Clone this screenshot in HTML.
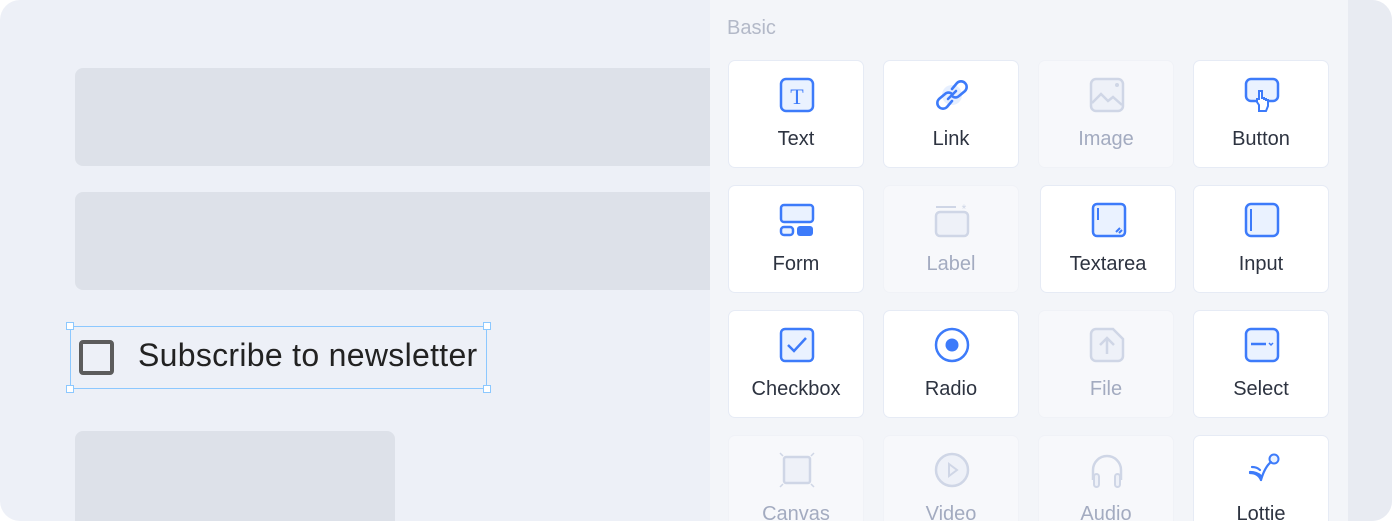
<!DOCTYPE html><html><head><style>
*{margin:0;padding:0;box-sizing:border-box}
body{width:1392px;height:521px;background:#fff;font-family:"Liberation Sans",sans-serif;overflow:hidden;position:relative}
#wrap{position:absolute;left:0;top:0;width:1392px;height:521px;background:#edf0f7;border-radius:20px;overflow:hidden}
.bar{position:absolute;background:#dde1e9;border-radius:8px}
#panel{position:absolute;left:710px;top:0;width:638px;height:521px;background:#f3f5f9}
#strip{position:absolute;left:1348px;top:0;width:44px;height:521px;background:#e8ebf2}
.card{position:absolute;width:136px;height:108px;background:#fff;border:1px solid #e6ebf5;border-radius:7px;text-align:center}
.card.d{background:#f7f8fb;border-color:#f0f2f7}
.card svg{position:absolute;left:50px;top:16px;width:36px;height:36px}
.card span{position:absolute;left:0;right:0;top:67px;font-size:20px;color:#2d3340}
.card.d span{color:#a3abc0}
.lbl{position:absolute;left:727px;top:17px;font-size:20px;color:#b3b9c8}
</style></head><body><div id="wrap">
<div class="bar" style="left:75px;top:68px;width:660px;height:98px"></div>
<div class="bar" style="left:75px;top:192px;width:660px;height:98px"></div>
<div class="bar" style="left:75px;top:431px;width:320px;height:110px"></div>
<div style="position:absolute;left:70px;top:326px;width:417px;height:63px;border:1px solid #8cc8ff"></div>
<div style="position:absolute;left:66px;top:322px;width:8px;height:8px;border:1px solid #8cc8ff;background:#fff"></div>
<div style="position:absolute;left:483px;top:322px;width:8px;height:8px;border:1px solid #8cc8ff;background:#fff"></div>
<div style="position:absolute;left:66px;top:385px;width:8px;height:8px;border:1px solid #8cc8ff;background:#fff"></div>
<div style="position:absolute;left:483px;top:385px;width:8px;height:8px;border:1px solid #8cc8ff;background:#fff"></div>
<div style="position:absolute;left:79px;top:340px;width:35px;height:35px;border:4px solid #5c5c5c;border-radius:4px"></div>
<div style="position:absolute;left:138px;top:337px;font-size:32px;color:#222;letter-spacing:0.3px">Subscribe to newsletter</div>
<div id="panel"></div><div id="strip"></div>
<div class="lbl">Basic</div>

<div class="card" style="left:728px;top:60px"><svg viewBox="0 0 36 36"><rect x="2" y="2" width="32" height="32" rx="5" fill="#eaf2ff" stroke="#3d7bfa" stroke-width="2.5"/><text x="18" y="27" font-size="22" text-anchor="middle" fill="#3d7bfa" font-family="Liberation Serif">T</text></svg><span>Text</span></div>
<div class="card" style="left:883px;top:60px"><svg viewBox="0 0 36 36"><circle cx="18" cy="18" r="10" fill="#e6efff"/><path d="M18 12l5-6a5.5 5.5 0 018 8l-6 5a5 5 0 01-7 0M18 24l-5 6a5.5 5.5 0 01-8-8l6-5a5 5 0 017 0M14 22l8-8" fill="none" stroke="#3d7bfa" stroke-width="2.6" stroke-linecap="round"/></svg><span>Link</span></div>
<div class="card d" style="left:1038px;top:60px"><svg viewBox="0 0 36 36"><rect x="2" y="2" width="32" height="32" rx="5" fill="#eef1f8" stroke="#cfd6e6" stroke-width="2.5"/><path d="M3 26l9-9 7 7 5-4 9 8" fill="none" stroke="#cfd6e6" stroke-width="2.5"/><circle cx="28" cy="8" r="2" fill="#cfd6e6"/></svg><span>Image</span></div>
<div class="card" style="left:1193px;top:60px"><svg viewBox="0 0 36 36"><rect x="2" y="2" width="32" height="22" rx="5" fill="#eaf2ff" stroke="#3d7bfa" stroke-width="2.5"/><path d="M15 34v-6l-2-3v-3h2v-8h3v7h2v1h2v1h2v6l-2 5z" fill="#fff" stroke="#3d7bfa" stroke-width="2"/></svg><span>Button</span></div>

<div class="card" style="left:728px;top:185px"><svg viewBox="0 0 36 36"><rect x="2" y="3" width="32" height="17" rx="3" fill="#eaf2ff" stroke="#3d7bfa" stroke-width="2.5"/><rect x="2" y="25" width="12" height="8" rx="3" fill="#eaf2ff" stroke="#3d7bfa" stroke-width="2.5"/><rect x="18" y="24" width="16" height="10" rx="3" fill="#3d7bfa"/></svg><span>Form</span></div>
<div class="card d" style="left:883px;top:185px"><svg viewBox="0 0 36 36"><path d="M2 5h20" stroke="#cfd6e6" stroke-width="2"/><text x="30" y="11" font-size="12" fill="#cfd6e6" text-anchor="middle">*</text><rect x="2" y="10" width="32" height="24" rx="4" fill="#eef1f8" stroke="#cfd6e6" stroke-width="2.5"/></svg><span>Label</span></div>
<div class="card" style="left:1040px;top:185px"><svg viewBox="0 0 36 36"><rect x="2" y="2" width="32" height="32" rx="4" fill="#eaf2ff" stroke="#3d7bfa" stroke-width="2.5"/><path d="M7 6v12M25 30l4-4M28 31l3-3" stroke="#3d7bfa" stroke-width="2"/></svg><span>Textarea</span></div>
<div class="card" style="left:1193px;top:185px"><svg viewBox="0 0 36 36"><rect x="2" y="2" width="32" height="32" rx="5" fill="#eaf2ff" stroke="#3d7bfa" stroke-width="2.5"/><path d="M7 7v22" stroke="#3d7bfa" stroke-width="2"/></svg><span>Input</span></div>

<div class="card" style="left:728px;top:310px"><svg viewBox="0 0 36 36"><rect x="2" y="2" width="32" height="32" rx="4" fill="#eaf2ff" stroke="#3d7bfa" stroke-width="2.5"/><path d="M9 18l6 6 12-13" fill="none" stroke="#3d7bfa" stroke-width="2.5"/></svg><span>Checkbox</span></div>
<div class="card" style="left:883px;top:310px"><svg viewBox="0 0 36 36"><circle cx="18" cy="18" r="16" fill="#fff" stroke="#3d7bfa" stroke-width="2.5"/><circle cx="18" cy="18" r="6.5" fill="#3d7bfa"/></svg><span>Radio</span></div>
<div class="card d" style="left:1038px;top:310px"><svg viewBox="0 0 36 36"><path d="M7 2h17l10 10v17a5 5 0 01-5 5H7a5 5 0 01-5-5V7a5 5 0 015-5z" fill="#eef1f8" stroke="#cfd6e6" stroke-width="2.5"/><path d="M18 27V11M11 18l7-7 7 7" fill="none" stroke="#cfd6e6" stroke-width="2.5"/></svg><span>File</span></div>
<div class="card" style="left:1193px;top:310px"><svg viewBox="0 0 36 36"><rect x="2" y="2" width="32" height="32" rx="5" fill="#eaf2ff" stroke="#3d7bfa" stroke-width="2.5"/><path d="M7 17h15" stroke="#3d7bfa" stroke-width="2.5"/><path d="M25 16l2 2 2-2" fill="none" stroke="#3d7bfa" stroke-width="1.5"/></svg><span>Select</span></div>

<div class="card d" style="left:728px;top:435px"><svg viewBox="0 0 36 36"><rect x="5" y="5" width="26" height="26" rx="2" fill="#eef1f8" stroke="#cfd6e6" stroke-width="2.5"/><path d="M1 1l3 3M35 1l-3 3M1 35l3-3M35 35l-3-3" stroke="#cfd6e6" stroke-width="1.5"/></svg><span>Canvas</span></div>
<div class="card d" style="left:883px;top:435px"><svg viewBox="0 0 36 36"><circle cx="18" cy="18" r="16" fill="#eef1f8" stroke="#cfd6e6" stroke-width="2.5"/><path d="M15 12l8 6-8 6z" fill="none" stroke="#cfd6e6" stroke-width="2"/></svg><span>Video</span></div>
<div class="card d" style="left:1038px;top:435px"><svg viewBox="0 0 36 36"><path d="M4 28V18a14 14 0 0128 0v10" fill="none" stroke="#cfd6e6" stroke-width="2.5"/><rect x="5" y="22" width="5" height="13" rx="2.5" fill="#eef1f8" stroke="#cfd6e6" stroke-width="2"/><rect x="26" y="22" width="5" height="13" rx="2.5" fill="#eef1f8" stroke="#cfd6e6" stroke-width="2"/></svg><span>Audio</span></div>
<div class="card" style="left:1193px;top:435px"><svg viewBox="0 0 36 36"><circle cx="30" cy="7" r="4.5" fill="#eaf2ff" stroke="#3d7bfa" stroke-width="2"/><path d="M27 10c-5 4-8 11-10 18" fill="none" stroke="#3d7bfa" stroke-width="2.2" stroke-linecap="round"/><path d="M17 28c-2-5-6-7-11-7M17 24c-3-3-6-4-11-4M8 15c3 0 6 1 8 3" fill="none" stroke="#3d7bfa" stroke-width="2.2" stroke-linecap="round"/></svg><span>Lottie</span></div>
</div></body></html>
